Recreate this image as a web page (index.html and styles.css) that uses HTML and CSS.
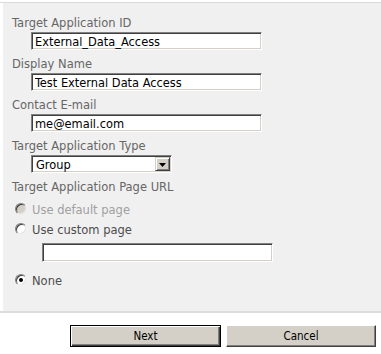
FILE: index.html
```html
<!DOCTYPE html>
<html lang="en">
<head>
    <meta charset="UTF-8">
    <title>Create New Secure Store Target Application</title>
    <link rel="stylesheet" href="styles.css">
</head>
<body>
    <div class="frame">
        <div class="panel">
            <div class="field">
                <label for="app-id">Target Application ID</label>
                <input type="text" id="app-id" class="text-box" value="External_Data_Access">
            </div>
            <div class="field">
                <label for="display-name">Display Name</label>
                <input type="text" id="display-name" class="text-box" value="Test External Data Access">
            </div>
            <div class="field">
                <label for="contact">Contact E-mail</label>
                <input type="text" id="contact" class="text-box" value="me@email.com">
            </div>
            <div class="field">
                <label>Target Application Type</label>
                <div class="select-box">
                    <span class="select-value">Group</span>
                    <span class="select-arrow">
                        <svg width="7" height="4" viewBox="0 0 7 4"><path d="M0 0h7L3.5 4z" fill="#000"/></svg>
                    </span>
                </div>
            </div>
            <div class="field">
                <label>Target Application Page URL</label>
            </div>
            <div class="option disabled">
                <span class="radio"></span>
                <span>Use default page</span>
            </div>
            <div class="option">
                <span class="radio"></span>
                <span>Use custom page</span>
            </div>
            <input type="text" class="text-box custom-url">
            <div class="option none">
                <span class="radio checked"></span>
                <span>None</span>
            </div>
        </div>
    </div>
    <div class="actions">
        <button class="btn default">Next</button>
        <button class="btn">Cancel</button>
    </div>
</body>
</html>
```
FILE: styles.css
```css
body {
    margin: 0;
    background-color: #fff;
    font-family: 'DejaVu Sans', sans-serif;
    font-size: 11.5px;
    color: #666;
}

.frame {
    margin-top: 2px;
    border-top: 1px solid #dadada;
    border-bottom: 2px solid #dcdcdc;
}

.panel {
    margin-left: 3px;
    background-color: #f0f0f0;
    padding: 12px 0 20px 9px;
    display: flex;
    flex-direction: column;
    align-items: flex-start;
}

.field {
    display: flex;
    flex-direction: column;
    align-items: flex-start;
    margin-bottom: 6px;
}

.field label {
    line-height: 16px;
}

.text-box,
.select-box {
    box-sizing: border-box;
    height: 18px;
    margin: 1px 0 0 19px;
    border: 1px solid;
    border-color: #808080 #fff #fff #808080;
    box-shadow: inset 1px 1px 0 #404040, inset -1px -1px 0 #d4d0c8;
    background-color: #fff;
    font-family: 'DejaVu Sans Condensed', 'DejaVu Sans', sans-serif;
    font-size: 12.7px;
    color: #000;
}

.text-box {
    width: 231px;
    padding: 0 0 0 3px;
    outline: none;
}

.select-box {
    width: 141px;
    display: flex;
    align-items: center;
    justify-content: space-between;
    padding: 1px 1px 1px 4px;
}

.select-arrow {
    box-sizing: border-box;
    width: 15px;
    height: 14px;
    background-color: #d4d0c8;
    border: 1px solid;
    border-color: #d4d0c8 #404040 #404040 #d4d0c8;
    box-shadow: inset 1px 1px 0 #fff, inset -1px -1px 0 #808080;
    display: flex;
    align-items: center;
    justify-content: center;
    padding-top: 1px;
}

.option {
    display: flex;
    align-items: center;
    height: 20px;
    color: #4c4c4c;
}

.option.disabled {
    margin-top: -1px;
    color: #a0a0a0;
}

.option.none {
    margin-top: 9px;
}

.radio {
    box-sizing: border-box;
    width: 12px;
    height: 12px;
    margin: 0 5px 2px 3px;
    border-radius: 50%;
    border: 1px solid;
    border-color: #808080 #f0f0f0 #f0f0f0 #808080;
    box-shadow: inset 1px 1px 0 #404040, inset -1px -1px 0 #e4e2dc;
    background-color: #fff;
    display: flex;
    align-items: center;
    justify-content: center;
}

.option.disabled .radio {
    background-color: #d4d0c8;
}

.radio.checked::after {
    content: '';
    width: 4px;
    height: 4px;
    border-radius: 50%;
    background-color: #000;
}

.custom-url {
    height: 19px;
    margin: 3px 0 0 30px;
}

.actions {
    display: flex;
    justify-content: flex-end;
    gap: 5px;
    padding: 12px 5px 0 0;
}

.btn {
    box-sizing: border-box;
    width: 150px;
    height: 22px;
    padding: 0;
    background-color: #d4d0c8;
    border: 1px solid;
    border-color: #fff #404040 #404040 #fff;
    box-shadow: inset -1px -1px 0 #808080, inset 1px 1px 0 #d4d0c8;
    font-family: 'DejaVu Sans Condensed', 'DejaVu Sans', sans-serif;
    font-size: 11.5px;
    color: #000;
}

.btn.default {
    width: 151px;
    border-color: #000;
    box-shadow: inset 1px 1px 0 #fff, inset -1px -1px 0 #404040, inset -2px -2px 0 #808080;
}
```
